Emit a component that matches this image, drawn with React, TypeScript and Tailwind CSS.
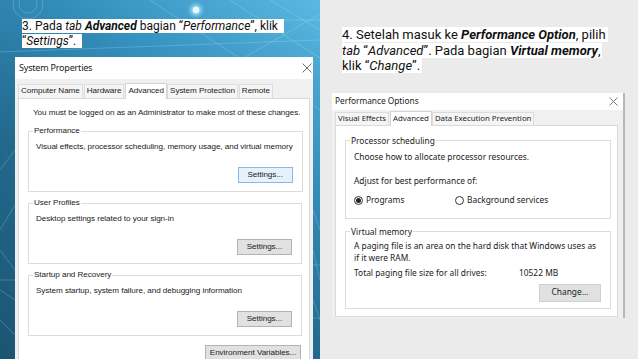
import React from "react";

function CloseX({ size = 10, color = "#6b6b6b" }: { size?: number; color?: string }) {
  return (
    <svg width={size} height={size} viewBox="0 0 10 10">
      <line x1="0.5" y1="0.5" x2="9.5" y2="9.5" stroke={color} strokeWidth="1" />
      <line x1="9.5" y1="0.5" x2="0.5" y2="9.5" stroke={color} strokeWidth="1" />
    </svg>
  );
}

function BgDecor() {
  return (
    <svg className="absolute inset-0" width="320" height="359" viewBox="0 0 320 359">
      <defs>
        <radialGradient id="glow" cx="0.5" cy="0.5" r="0.5">
          <stop offset="0" stopColor="#ffffff" stopOpacity="0.9" />
          <stop offset="0.4" stopColor="#c8f2ff" stopOpacity="0.6" />
          <stop offset="1" stopColor="#7fd3f5" stopOpacity="0" />
        </radialGradient>
      </defs>
      <g stroke="#bfeaff" strokeOpacity="0.3" fill="none" strokeWidth="0.8">
        <circle cx="28" cy="4" r="9" />
        <circle cx="28" cy="4" r="15" />
        <line x1="150" y1="0" x2="320" y2="110" />
        <line x1="230" y1="0" x2="320" y2="58" />
        <line x1="270" y1="0" x2="320" y2="30" />
        <line x1="320" y1="14" x2="240" y2="60" />
        <line x1="110" y1="20" x2="320" y2="20" />
        <line x1="0" y1="52" x2="320" y2="40" />
        <line x1="0" y1="170" x2="15" y2="150" />
        <line x1="0" y1="230" x2="15" y2="205" />
        <line x1="0" y1="250" x2="15" y2="270" />
        <line x1="0" y1="290" x2="15" y2="300" />
        <line x1="0" y1="320" x2="15" y2="335" />
        <line x1="0" y1="280" x2="15" y2="280" />
        <line x1="313" y1="210" x2="320" y2="230" />
        <line x1="313" y1="250" x2="320" y2="280" />
        <line x1="313" y1="300" x2="320" y2="320" />
        <line x1="313" y1="265" x2="320" y2="265" />
        <line x1="313" y1="318" x2="320" y2="318" />
      </g>
      <circle cx="196" cy="10" r="9" fill="url(#glow)" />
      <circle cx="196" cy="10" r="3.2" fill="#e6f9ff" />
    </svg>
  );
}

function Btn({ children, w, focused }: { children: React.ReactNode; w: string; focused?: boolean }) {
  return (
    <div
      className={
        "h-[16px] shrink-0 flex items-center justify-center border " +
        w +
        " " +
        (focused ? "bg-[#e5f1fb] border-[#8ab7e3]" : "bg-[#e1e1e1] border-[#b3b3b3]")
      }
    >
      {children}
    </div>
  );
}

function SysGroup({
  label,
  text,
  focused,
  className,
}: {
  label: string;
  text: string;
  focused?: boolean;
  className?: string;
}) {
  return (
    <fieldset className={"border border-[#dcdcdc] mr-[7px] pl-[7px] pr-[9px] pb-[8px] " + (className || "")}>
      <legend className="-ml-[3px] px-[1px] leading-[10px] text-[#222]">{label}</legend>
      <div className="mt-[6px] leading-[10px] whitespace-nowrap">{text}</div>
      <div className="mt-[15px] flex justify-end">
        <Btn w="w-[55px]" focused={focused}>Settings...</Btn>
      </div>
    </fieldset>
  );
}

function SystemProperties() {
  const tabs = ["Computer Name", "Hardware", "Advanced", "System Protection", "Remote"];
  return (
    <div className="relative ml-[15px] mt-[8px] w-[298px] flex-1 min-h-0 bg-[#f0f0f0] flex flex-col overflow-hidden font-['Liberation_Sans',Arial,sans-serif] text-[8.1px] text-[#1a1a1a] tracking-[-0.05px]">
      <div className="h-[22px] shrink-0 bg-white flex items-center justify-between pl-[4px] pr-[1px]">
        <span className="text-[9px] font-['Noto_Sans',sans-serif] text-[#222] tracking-[-0.2px]">System Properties</span>
        <CloseX size={10} />
      </div>
      <div className="h-[19px] shrink-0 flex items-end pl-[3px]">
        {tabs.map((t) =>
          t === "Advanced" ? (
            <div
              key={t}
              className="relative z-10 -mb-px h-[16px] px-[2px] bg-white border border-b-0 border-[#d4d4d4] flex items-center"
            >
              {t}
            </div>
          ) : (
            <div
              key={t}
              className="h-[14px] px-[2px] mr-[1px] bg-[#f5f5f5] border border-b-0 border-[#dcdcdc] flex items-center"
            >
              {t}
            </div>
          )
        )}
      </div>
      <div className="mx-[3px] flex-1 shrink-0 bg-white border border-[#d9d9d9] pl-[9px] pt-[9px]">
        <div className="pl-[5px] leading-[10px] whitespace-nowrap">
          You must be logged on as an Administrator to make most of these changes.
        </div>
        <SysGroup
          className="mt-[8px]"
          label="Performance"
          text="Visual effects, processor scheduling, memory usage, and virtual memory"
          focused
        />
        <SysGroup className="mt-[6px]" label="User Profiles" text="Desktop settings related to your sign-in" />
        <SysGroup
          className="mt-[6px]"
          label="Startup and Recovery"
          text="System startup, system failure, and debugging information"
        />
        <div className="mt-[9px] mr-[8px] flex justify-end">
          <Btn w="w-[96px]">Environment Variables...</Btn>
        </div>
      </div>
    </div>
  );
}

function Radio({ checked }: { checked?: boolean }) {
  return (
    <span className="w-[9px] h-[9px] rounded-full border border-[#333] bg-white flex items-center justify-center">
      {checked && <span className="w-[5px] h-[5px] rounded-full bg-[#222]" />}
    </span>
  );
}

function PerformanceOptions() {
  return (
    <div className="ml-[12px] mt-[19px] w-[293px] h-[225px] bg-[#f0f0f0] border-r-2 border-[#b8b8b8] flex flex-col font-['Noto_Sans',sans-serif] text-[8.4px] text-[#1a1a1a]">
      <div className="h-[17px] shrink-0 bg-white flex items-center justify-between pl-[3px] pr-[5px]">
        <span className="text-[8.3px] text-[#222]">Performance Options</span>
        <CloseX size={9} />
      </div>
      <div className="h-[15px] shrink-0 flex items-end pl-[3px] text-[7.8px]">
        <div className="h-[13px] px-[2px] mr-[1px] bg-[#f5f5f5] border border-b-0 border-[#dcdcdc] flex items-center">
          Visual Effects
        </div>
        <div className="relative z-10 -mb-px h-[15px] px-[2px] bg-white border border-b-0 border-[#d4d4d4] flex items-center">
          Advanced
        </div>
        <div className="h-[13px] px-[2px] bg-[#f5f5f5] border border-b-0 border-[#dcdcdc] flex items-center">
          Data Execution Prevention
        </div>
      </div>
      <div className="ml-[3px] w-[283px] flex-1 bg-white border border-[#d9d9d9] pl-[9px] pt-[9px] mb-[1px]">
        <fieldset className="w-[266px] border border-[#dcdcdc] pl-[8px] pb-[12px]">
          <legend className="-ml-[4px] px-[1px] leading-[11px] text-[#222]">Processor scheduling</legend>
          <div className="mt-[5px] leading-[11px]">Choose how to allocate processor resources.</div>
          <div className="mt-[13px] leading-[11px]">Adjust for best performance of:</div>
          <div className="mt-[9px] h-[11px] flex items-center">
            <Radio checked />
            <span className="ml-[3px] w-[89px]">Programs</span>
            <Radio />
            <span className="ml-[3px]">Background services</span>
          </div>
        </fieldset>
        <fieldset className="mt-[7px] w-[266px] border border-[#dcdcdc] pl-[8px] pb-[6px]">
          <legend className="-ml-[4px] px-[1px] leading-[11px] text-[#222]">Virtual memory</legend>
          <div className="mt-[3px] leading-[12px]">
            A paging file is an area on the hard disk that Windows uses as
            <br />
            if it were RAM.
          </div>
          <div className="mt-[3px] leading-[11px] flex">
            <span className="w-[165px]">Total paging file size for all drives:</span>
            <span>10522 MB</span>
          </div>
          <div className="mt-[6px] pr-[9px] flex justify-end">
            <div className="w-[62px] h-[18px] bg-[#e1e1e1] border border-[#cfcfcf] flex items-center justify-center">
              Change...
            </div>
          </div>
        </fieldset>
      </div>
    </div>
  );
}

export default function App() {
  return (
    <div className="w-[638px] h-[359px] flex overflow-hidden">
      <div className="relative w-[320px] h-full overflow-hidden flex flex-col bg-[linear-gradient(35deg,#1b5472_0%,#236a8f_40%,#3490bd_70%,#5ab8e2_100%)]">
        <BgDecor />
        <p className="relative pl-[22px] pt-[19px] text-[12px] leading-[15px] text-[#111] font-['Roboto',sans-serif]">
          <span className="bg-white box-decoration-clone pr-[6px]">
            3. Pada <i>tab</i> <b><i>Advanced</i></b> bagian “<i>Performance</i>”, klik
            <br />
            “<i>Settings</i>”.
          </span>
        </p>
        <SystemProperties />
      </div>
      <div className="flex-1 h-full bg-[#ebebeb] flex flex-col">
        <p className="pl-[22px] pt-[27px] text-[13px] leading-[15.5px] text-[#111] font-['Roboto',sans-serif]">
          <span className="bg-white box-decoration-clone pr-[2px]">
            4. Setelah masuk ke <b><i>Performance Option</i></b>, pilih
            <br />
            <i>tab</i> “<i>Advanced</i>”. Pada bagian <b><i>Virtual memory</i></b>,
            <br />
            klik “<i>Change</i>”.
          </span>
        </p>
        <PerformanceOptions />
      </div>
    </div>
  );
}
